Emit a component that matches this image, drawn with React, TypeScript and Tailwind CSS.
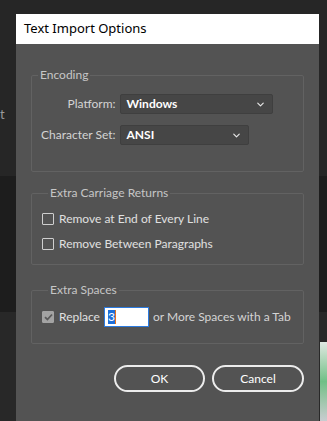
import { ChevronDown } from 'lucide-react';

const font = { fontFamily: 'Lato, "Noto Sans", sans-serif' };

function Select({ value, width }: { value: string; width: string }) {
  return (
    <div
      className={`flex h-[20px] ${width} items-center justify-between rounded-[2px] border border-[#3f3f3f] bg-[#464646] pl-[6px] pr-[6px]`}
    >
      <span className="text-[12px] font-bold leading-none text-white">{value}</span>
      <ChevronDown size={11} strokeWidth={2.5} className="text-[#e8e8e8]" />
    </div>
  );
}

function Check({ checked, label }: { checked?: boolean; label: string }) {
  return (
    <div className="flex items-center gap-[5px]">
      <div
        className={`flex h-[12px] w-[12px] items-center justify-center rounded-[1px] border ${
          checked ? 'border-[#a3a3a3] bg-[#a3a3a3]' : 'border-[#cfcfcf] bg-transparent'
        }`}
      >
        {checked && (
          <svg width="9" height="8" viewBox="0 0 9 8">
            <path d="M1 4.2 L3.4 6.5 L8 1.5" fill="none" stroke="#5a5a5a" strokeWidth="1.8" />
          </svg>
        )}
      </div>
      <span className="whitespace-nowrap text-[12px] leading-none text-[#e0e0e0]">{label}</span>
    </div>
  );
}

function Group({ title, children, className }: { title: string; children: React.ReactNode; className?: string }) {
  return (
    <fieldset className={`rounded-[2px] border border-[#626262] ${className ?? ''}`}>
      <legend className="ml-[6px] px-[2px] text-[12px] leading-[16px] text-[#c6c6c6]">{title}</legend>
      {children}
    </fieldset>
  );
}

export default function App() {
  return (
    <div className="relative h-[421px] w-[327px] overflow-hidden" style={font}>
      {/* background app behind the dialog */}
      <div className="flex h-full flex-col">
        <div className="flex h-[176px] items-center bg-[#262626] pt-[54px]">
          <span className="text-[13px] text-[#9a9a9a]">t</span>
        </div>
        <div className="h-[136px] bg-[#1d1d1d]" />
        <div className="flex flex-1 justify-end bg-[#282828] pt-[30px]">
          <div className="h-full w-[7px] bg-gradient-to-b from-[#dfe8e2] via-[#6fbf86] to-[#c9ccd0]" />
        </div>
      </div>

      {/* dialog */}
      <div className="absolute left-[16px] top-[14px] flex h-[407px] w-[303px] flex-col bg-[#535353]">
        <div className="flex h-[30px] items-center bg-white px-[8px]">
          <span className="text-[13px] text-black" style={{ fontFamily: '"Noto Sans", sans-serif' }}>
            Text Import Options
          </span>
        </div>

        <div className="flex flex-col px-[15px] pt-[23px]">
          <Group title="Encoding" className="pb-[26px] pt-[11px]">
            <div className="grid grid-cols-[auto_auto] items-center justify-start gap-x-[4px] gap-y-[11px] pl-[9px]">
              <span className="whitespace-nowrap text-right text-[12px] text-[#d4d4d4]">Platform:</span>
              <Select value="Windows" width="w-[153px]" />
              <span className="whitespace-nowrap text-right text-[12px] text-[#d4d4d4]">Character Set:</span>
              <Select value="ANSI" width="w-[129px]" />
            </div>
          </Group>

          <Group title="Extra Carriage Returns" className="mt-[13px] flex flex-col gap-[13px] pb-[14px] pl-[10px] pt-[12px]">
            <Check label="Remove at End of Every Line" />
            <Check label="Remove Between Paragraphs" />
          </Group>

          <Group title="Extra Spaces" className="mt-[17px] pb-[16px] pl-[10px] pt-[9px]">
            <div className="flex items-center">
              <Check checked label="Replace" />
              <div className="ml-[4px] flex h-[20px] w-[45px] items-center border border-[#2c7be0] bg-white pl-[3px]">
                <span className="bg-[#1e6fd9] text-[12px] leading-[14px] text-white">3</span>
                <span className="h-[14px] w-px bg-[#e8731a]" />
              </div>
              <span className="ml-[4px] whitespace-nowrap text-[12px] text-[#d4d4d4]">or More Spaces with a Tab</span>
            </div>
          </Group>

          <div className="mt-[21px] flex justify-end gap-[7px]">
            <button className="h-[27px] w-[91px] rounded-full border-2 border-[#ececec] text-[12px] text-white">
              OK
            </button>
            <button className="h-[27px] w-[92px] rounded-full border-2 border-[#ececec] text-[12px] text-white">
              Cancel
            </button>
          </div>
        </div>
      </div>
    </div>
  );
}
